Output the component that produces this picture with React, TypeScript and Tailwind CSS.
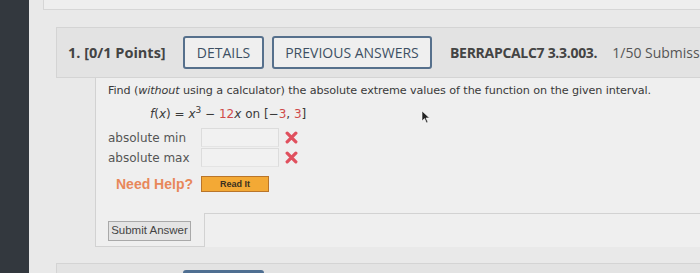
import React from 'react';

const RedX = () => (
    <svg width="13" height="13" viewBox="0 0 12 12" className="shrink-0">
        <path d="M2 2 L10 10 M10 2 L2 10" stroke="#e0505e" strokeWidth="3" strokeLinecap="round" />
    </svg>
);

const AnswerRow: React.FC<{ label: string }> = ({ label }) => (
    <div className="flex items-center h-[20px]">
        <span className="w-[93px] text-[#555] text-[12px]">{label}</span>
        <div className="w-[78px] h-[19px] border border-[#dcdcdc] border-b-[#e4e4e4] bg-[#f1f1f1]" />
        <span className="ml-[6px] flex items-center">
            <RedX />
        </span>
    </div>
);

export default function App() {
    return (
        <div
            className="flex w-[700px] h-[273px] overflow-hidden bg-[#e9e9e9] text-[#3a3a3a]"
            style={{ fontFamily: '"Open Sans", "DejaVu Sans", sans-serif' }}
        >
            <div className="w-[29px] shrink-0 bg-[#33383e]" />
            <div className="relative flex-1 flex flex-col overflow-hidden">
                <div className="shrink-0 ml-[14px] h-[10px] border-l border-b border-[#d6d6d6] bg-[#eeeeee]" />

                {/* question header */}
                <div className="shrink-0 mt-[17px] ml-[27px] h-[51px] flex items-center pl-[11px] bg-[#e3e3e3] border-t border-l border-b border-[#d4d4d4] whitespace-nowrap overflow-hidden">
                    <span className="font-bold text-[14.5px] text-[#444] w-[115px]">1. [0/1 Points]</span>
                    <div className="w-[81px] h-[33px] flex items-center justify-center border-2 border-[#56708c] rounded-[3px] bg-[#efefef] text-[14px] text-[#3d4f63]">
                        DETAILS
                    </div>
                    <div className="ml-[8px] w-[160px] h-[33px] flex items-center justify-center border-2 border-[#56708c] rounded-[3px] bg-[#efefef] text-[14px] text-[#3d4f63]">
                        PREVIOUS ANSWERS
                    </div>
                    <span className="ml-[18px] font-bold text-[14px] text-[#444] tracking-[-0.3px]">BERRAPCALC7 3.3.003.</span>
                    <span className="ml-[15px] text-[14px] text-[#555]">1/50 Submiss</span>
                </div>

                {/* question body */}
                <div className="shrink-0 ml-[66px] border-l border-[#d2d2d2] bg-[#efefef] flex flex-col" style={{ fontFamily: '"DejaVu Sans", Verdana, sans-serif' }}>
                    <p className="pl-[12px] pt-[5px] text-[11.2px] text-[#3a3a3a] whitespace-nowrap tracking-[-0.1px]">
                        Find (<i>without</i> using a calculator) the absolute extreme values of the function on the given interval.
                    </p>
                    <p className="pl-[54px] mt-[5px] text-[12px] text-[#3a3a3a] whitespace-nowrap">
                        <i>f</i>(<i>x</i>) = <i>x</i>
                        <sup className="text-[9px]">3</sup> − <span className="text-[#cf4a4a]">12</span><i>x</i> on [−
                        <span className="text-[#cf4a4a]">3</span>, <span className="text-[#cf4a4a]">3</span>]
                    </p>
                    <div className="pl-[12px] mt-[5px] flex flex-col">
                        <AnswerRow label="absolute min" />
                        <AnswerRow label="absolute max" />
                    </div>
                    <div className="pl-[20px] mt-[6px] flex items-center" style={{ fontFamily: '"Liberation Sans", Arial, sans-serif' }}>
                        <span className="font-bold text-[14px] text-[#e8875a]">Need Help?</span>
                        <div className="ml-[8px] w-[68px] h-[16px] flex items-center justify-center bg-[#f3a935] border border-[#b9752a] text-[9px] font-bold text-[#3b3020]">
                            Read It
                        </div>
                    </div>
                    <div className="mt-[18px] flex">
                        <div className="w-[108px] h-[34px] border-b border-[#d2d2d2] pl-[12px] pt-[8px]">
                            <div
                                className="w-[83px] h-[20px] flex items-center justify-center bg-[#e4e4e4] border border-[#a9a9a9] text-[11.5px] text-[#444]"
                                style={{ fontFamily: '"Liberation Sans", Arial, sans-serif' }}
                            >
                                Submit Answer
                            </div>
                        </div>
                        <div className="flex-1 border-t border-l border-[#d2d2d2]" />
                    </div>
                </div>

                {/* next question */}
                <div className="shrink-0 mt-[16px] ml-[27px] h-[30px] border-t border-l border-[#d4d4d4] bg-[#e3e3e3] pl-[126px] pt-[6px]">
                    <div className="w-[81px] h-[10px] rounded-t-[3px] bg-[#4f6f92]" />
                </div>

                {/* mouse pointer */}
                <svg className="absolute left-[392px] top-[110px]" width="10" height="14" viewBox="0 0 10 14">
                    <path d="M1 1 L1 11 L3.5 8.6 L5.5 13 L7 12.3 L5 8 L8.5 8 Z" fill="#222" stroke="#fff" strokeWidth="0.6" />
                </svg>
            </div>
        </div>
    );
}
